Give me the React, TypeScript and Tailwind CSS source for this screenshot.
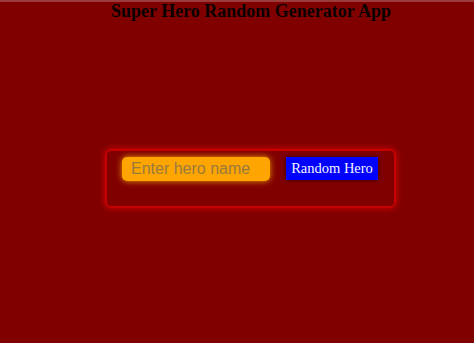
export default function App() {
  return (
    <div className="min-h-screen w-full bg-[#800000] border-t-2 border-[#9c3b3b] font-['Liberation_Serif',serif]">
      <h1 className="pl-[28px] text-center text-[18px] font-bold leading-[19px] text-[#0a0000]">
        Super Hero Random Generator App
      </h1>
      <div className="ml-[105px] mt-[128px] flex h-[59px] w-[291px] items-start gap-[16px] rounded-md border-2 border-[#c40000] px-[15px] pt-[6px] shadow-[0_0_6px_#e00000]">
        <input
          type="text"
          placeholder="Enter hero name"
          className="h-[24px] w-[148px] rounded-[5px] bg-[#ffa500] px-[9px] font-['Liberation_Sans',sans-serif] text-[16px] text-black shadow-[0_0_6px_#e8a000] outline-none placeholder:text-[#9a7a3e]"
        />
        <button className="h-[23px] w-[92px] bg-[#0000ff] text-[14.5px] text-[#f4f4ff] shadow-[0_0_4px_#300000]">
          Random Hero
        </button>
      </div>
    </div>
  );
}
